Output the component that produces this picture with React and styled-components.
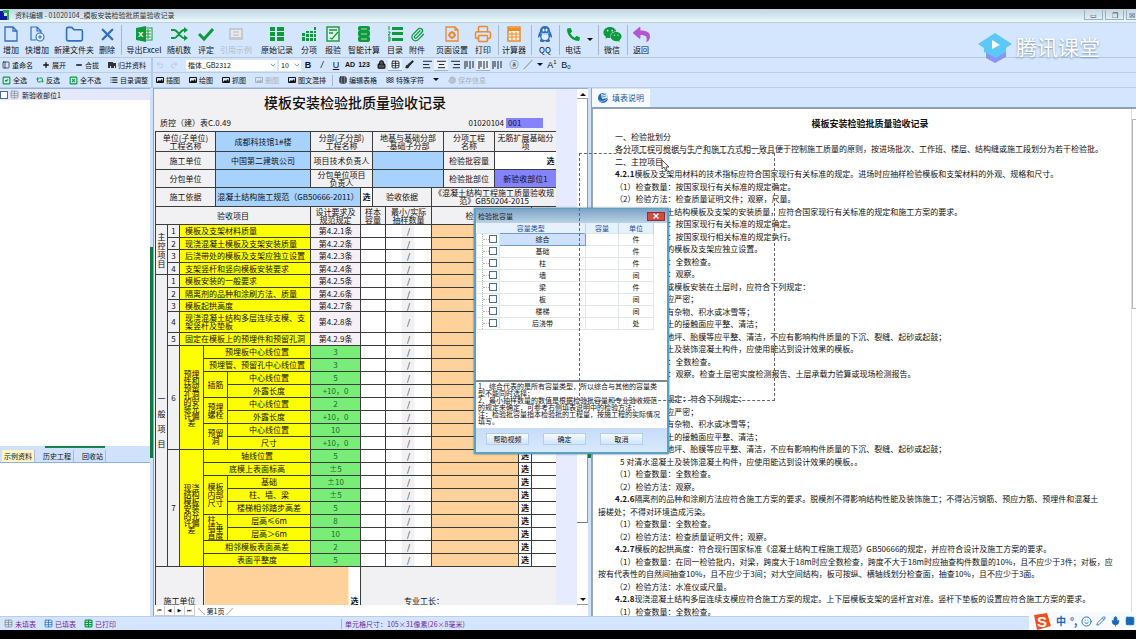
import React, { useState } from 'react'
import styled, { createGlobalStyle } from 'styled-components'
import {
  Folder, X, Printer, Paperclip, Lock, Undo2, Redo2,
  AlignLeft, AlignCenter, AlignRight, Table, List, Plus, Minus, PanelLeft, ChevronDown,
  Brush, Pencil, Mic, Smile, Hand, Waves, Grid2x2, SquareX, SquareCheck, Repeat2,
} from 'lucide-react'
import { FaPhoneAlt, FaReply, FaWeixin } from 'react-icons/fa'

const green = '#0d9a3c'
const blue = '#2f6fc4'
const orange = '#ee8a2a'

const SVG16 = ({ children }) => <svg width="16" height="16" viewBox="0 0 16 16" fill="none">{children}</svg>

const FileIcon = () => (
  <SVG16>
    <path d="M2 1h8l4 4v10H2zM10 1v4h4" stroke={blue} strokeWidth="1.3" />
  </SVG16>
)
const FileAddIcon = () => (
  <SVG16>
    <path d="M12 7V5L8 1H2v13h5M8 1v4h4" stroke={blue} strokeWidth="1.2" />
    <circle cx="11" cy="11" r="4" fill="#e6f1ff" stroke={blue} strokeWidth="1.1" />
    <path d="M11 9v4M9 11h4" stroke={blue} />
  </SVG16>
)
const ExcelIcon = () => (
  <svg width="18" height="16" viewBox="0 0 18 16">
    <rect x="9" y="2" width="8" height="12" fill="#fff" stroke={green} />
    <path d="M10 5h6M10 8h6M10 11h6M13 3v10" stroke={green} />
    <path d="M1 2l10-2v16L1 14z" fill={green} />
    <text x="3" y="11" fontSize="8" fontWeight="700" fill="#fff" fontFamily="Liberation Sans, sans-serif">X</text>
  </svg>
)
const RandomIcon = () => (
  <svg width="17" height="14" viewBox="0 0 17 14" fill="none">
    <path d="M0 3h3c4 0 6 8 10 8h1M0 11h3c4 0 6-8 10-8h1" stroke={green} strokeWidth="2" />
    <path d="M13 0l4 3-4 3zM13 8l4 3-4 3z" fill={green} />
  </svg>
)
const TickIcon = () => (
  <SVG16>
    <path d="M1 8l5 5L15 3" stroke={green} strokeWidth="3" />
  </SVG16>
)
const QuoteIcon = () => (
  <SVG16>
    <rect x="1" y="2" width="14" height="12" fill="#c5c9cf" />
    <rect x="3" y="4" width="10" height="7" fill="#e9ebee" />
    <path d="M5 6h6M5 9h6" stroke="#b5babf" />
  </SVG16>
)
const RecordIcon = () => (
  <SVG16>
    <path d="M1 1h5v4H1zM1 6h5v4H1zM1 11h5v4H1zM8 1h7v4H8zM8 6h7v4H8zM8 11h7v4H8z" fill={green} />
  </SVG16>
)
const BarsIcon = () => (
  <SVG16>
    <path d="M1 7h3v3H1zM1 11h3v4H1zM5 5h3v2H5zM5 8h3v3H5zM5 12h3v3H5zM9 5h3v2H9zM9 8h3v3H9zM9 12h3v3H9zM13 1h2v3h-2zM13 5h2v2h-2zM13 8h2v3h-2zM13 12h2v3h-2z" fill={green} />
  </SVG16>
)
const InspectIcon = () => (
  <SVG16>
    <rect x="2" y="1" width="12" height="14" fill="#e8f7ee" stroke={green} strokeWidth="1.4" />
    <path d="M4 4h8M4 7h4M5 12l2 1 6-7" stroke={green} strokeWidth="1.3" />
  </SVG16>
)
const ServerIcon = () => (
  <SVG16>
    <rect x="2" y="0" width="12" height="5" rx="2" fill={green} />
    <rect x="2" y="5" width="12" height="5" rx="1" fill={green} />
    <rect x="2" y="10" width="12" height="6" rx="2" fill={green} />
    <path d="M5 3h6M5 8h6M5 13h6" stroke="#a9dcbb" />
  </SVG16>
)
const IndexIcon = () => (
  <SVG16>
    <path d="M5 1h11v3H5zM5 6h11v3H5zM5 12h11v3H5z" fill={green} />
    <path d="M2 0v4M1 6h2v1.500L1 9h2M1 11h2v4H1M1 13h2" stroke={green} />
  </SVG16>
)
const PageSetupIcon = () => (
  <SVG16>
    <path d="M2 1h9l3 3v11H2zM11 1v3h3" stroke={orange} strokeWidth="1.3" />
    <circle cx="8" cy="9" r="2.500" stroke={orange} strokeWidth="1.800" />
    <path d="M8 5v1.500M8 11.500V13M4 9h1.500M10.500 9H12" stroke={orange} strokeWidth="1.400" />
  </SVG16>
)
const CalcIcon = () => (
  <SVG16>
    <rect x="2" y="1" width="12" height="14" fill="#fff3e4" stroke={orange} strokeWidth="1.500" />
    <path d="M2 2h12v3H2z" fill={orange} />
    <path d="M3 8h10M3 11h10M6 6v8M10 6v8" stroke={orange} />
  </SVG16>
)
const PenguinIcon = () => (
  <SVG16>
    <path d="M8 0c-3 0-5 2-5 5-1 2-2 4-2 6 0 1 1 1 2-1 0 2 1 3 1 3-2 1-1 3 1 3 1 0 2 0 3-1 1 1 2 1 3 1 2 0 3-2 1-3 0 0 1-1 1-3 1 2 2 2 2 1 0-2-1-4-2-6 0-3-2-5-5-5z" fill={blue} />
    <ellipse cx="8" cy="10.500" rx="3.500" ry="3.500" fill="#e4efff" />
    <ellipse cx="6.500" cy="4" rx="1" ry="1.500" fill="#fff" />
    <ellipse cx="9.500" cy="4" rx="1" ry="1.500" fill="#fff" />
    <path d="M4 7c3 1.500 5 1.500 8 0" stroke="#9ec6f7" strokeWidth="1.300" />
  </SVG16>
)
const VLines = () => (
  <svg width="10" height="10" viewBox="0 0 10 10"><path d="M1 1v8M3 1v6M6 1v8M9 1v7" stroke="#222" /></svg>
)
const PictureIcon = () => (
  <svg width="8" height="8" viewBox="0 0 8 8" fill="none">
    <path d="M0.500 1.500h7v5h-7z" stroke="currentColor" />
    <path d="M1 6l2-2 1 1 2-2 1 3z" fill="currentColor" />
  </svg>
)
const MergeIcon = () => (
  <svg width="8" height="8" viewBox="0 0 8 8">
    <path d="M0 1h5v1h3v5H7V5H6v2H3V5H2v2H0z" fill="#333" />
  </svg>
)
const AppLogo = () => (
  <svg width="10" height="12" viewBox="0 0 10 12">
    <path d="M0 2h4v5h3v4H0z" fill="#0b1c9a" />
    <path d="M3 1h6v10H7V4H3z" fill="#1eb14b" />
  </svg>
)
const HatLogo = () => (
  <svg width="36" height="32" viewBox="0 0 36 32">
    <path d="M9 20l9 5 11-6v6l-11 6-9-5z" fill="#8c93f5" />
    <path d="M18 1l17 11-6 4v4l-10 6-12-6v-4l-6-4z" fill="#5cc8f8" />
    <path d="M15 8l8 5-8 4z" fill="#fff" />
  </svg>
)
const TabLogo = () => (
  <svg width="12" height="12" viewBox="0 0 12 12">
    <circle cx="6" cy="6" r="5" fill="#2468b4" />
    <path d="M4 2l6-1 1 5-6 1z" fill="#dcebfb" />
    <path d="M5 3l4-1M5 5l4-1" stroke="#5b95d0" />
    <path d="M1 8c3 2 6 2 10-2" stroke="#8fc2f0" fill="none" />
  </svg>
)
const SogouLogo = () => (
  <svg width="20" height="19" viewBox="0 0 20 19">
    <path d="M2 3l13-2 4 13-14 4z" fill="#f0501e" />
    <text x="5" y="15" fontSize="15" fontWeight="700" fill="#fff" fontFamily="Liberation Sans, sans-serif">S</text>
  </svg>
)
const Pointer = () => (
  <svg width="9" height="13" viewBox="0 0 9 13"><path d="M1 1v9l2-2 2 4 1-1-1-3h3z" fill="#fff" stroke="#555" /></svg>
)

const mainTools = [
  { label: '增加', icon: <FileIcon />, w: 22 },
  { label: '快增加', icon: <FileAddIcon />, w: 30 },
  { label: '新建文件夹', icon: <Folder size={19} color={blue} strokeWidth={2} />, w: 44 },
  { label: '删除', icon: <X size={19} color={blue} strokeWidth={3} />, w: 22 },
  { sep: true, w: 6 },
  { label: '导出Excel', icon: <ExcelIcon />, w: 40 },
  { label: '随机数', icon: <RandomIcon />, w: 30 },
  { label: '评定', icon: <TickIcon />, w: 24 },
  { label: '引用示例', icon: <QuoteIcon />, w: 36, off: true },
  { gap: true, w: 4 },
  { label: '原始记录', icon: <RecordIcon />, w: 38 },
  { label: '分项', icon: <BarsIcon />, w: 26 },
  { label: '报验', icon: <InspectIcon />, w: 22 },
  { label: '智能计算', icon: <ServerIcon />, w: 40 },
  { label: '目录', icon: <IndexIcon />, w: 22 },
  { label: '附件', icon: <Paperclip size={15} color={green} strokeWidth={2} />, w: 22 },
  { gap: true, w: 6 },
  { label: '页面设置', icon: <PageSetupIcon />, w: 36 },
  { label: '打印', icon: <Printer size={18} color={orange} strokeWidth={2} />, w: 26 },
  { sep: true, w: 4 },
  { label: '计算器', icon: <CalcIcon />, w: 28 },
  { sep: true, w: 6 },
  { label: 'QQ', icon: <PenguinIcon />, w: 22 },
  { sep: true, w: 6 },
  { label: '电话', icon: <FaPhoneAlt size={13} color={green} />, w: 22 },
  { label: '', arrow: true, w: 12 },
  { sep: true, w: 4 },
  { label: '微信', icon: <FaWeixin size={19} color={green} />, w: 24 },
  { sep: true, w: 6 },
  { label: '返回', icon: <FaReply size={17} color="#b455d6" />, w: 22 },
]

const ruleRows = [
  { n: 1, text: '模板及支架材料质量', rule: '第4.2.1条', h: 13 },
  { n: 2, text: '现浇混凝土模板及支架安装质量', rule: '第4.2.2条', h: 12 },
  { n: 3, text: '后浇带处的模板及支架应独立设置', rule: '第4.2.3条', h: 13 },
  { n: 4, text: '支架竖杆和竖向模板安装要求', rule: '第4.2.4条', h: 12 },
  { n: 1, text: '模板安装的一般要求', rule: '第4.2.5条', h: 13 },
  { n: 2, text: '隔离剂的品种和涂刷方法、质量', rule: '第4.2.6条', h: 12 },
  { n: 3, text: '模板起拱高度', rule: '第4.2.7条', h: 12 },
  { n: 4, text: '现浇混凝土结构多层连续支模、支架竖杆及垫板', rule: '第4.2.8条', h: 21 },
  { n: 5, text: '固定在模板上的预埋件和预留孔洞', rule: '第4.2.9条', h: 13 },
]

const sizeRows = [
  { no: 6, noSpan: 8, title: '预埋件和预留孔洞的安装允许偏差', name: '预埋板中心线位置', v: '3' },
  { name: '预埋管、预留孔中心线位置', v: '3' },
  { group: '插筋', span: 2, name: '中心线位置', v: '5' },
  { inGroup: true, name: '外露长度', v: '+10，0' },
  { group: '预埋螺栓', span: 2, name: '中心线位置', v: '2' },
  { inGroup: true, name: '外露长度', v: '+10，0' },
  { group: '预留洞', span: 2, name: '中心线位置', v: '10' },
  { inGroup: true, name: '尺寸', v: '+10，0' },
  { no: 7, noSpan: 9, title: '现浇结构模板安装的允许偏差', name: '轴线位置', v: '5' },
  { name: '底模上表面标高', v: '±5' },
  { group: '模板内部尺寸', span: 3, name: '基础', v: '±10' },
  { inGroup: true, name: '柱、墙、梁', v: '±5' },
  { inGroup: true, name: '楼梯相邻踏步高差', v: '5' },
  { group: '柱、墙垂直度', span: 2, name: '层高≤6m', v: '8' },
  { inGroup: true, name: '层高＞6m', v: '10' },
  { name: '相邻模板表面高差', v: '2' },
  { name: '表面平整度', v: '5' },
]

const capacity = [
  ['综合', '件'], ['基础', '件'], ['柱', '件'], ['墙', '间'],
  ['梁', '件'], ['板', '间'], ['楼梯', '间'], ['后浇带', '处'],
]

const columns = [12, 12, 24, 12, 12, 83, 50, 12, 13, 46, 12, 51, 24, 13, 25]

const docLines = [
  { t: '一、检验批划分' },
  { t: '各分项工程可根据与生产和施工方式相一致且便于控制施工质量的原则，按进场批次、工作班、楼层、结构缝或施工段划分为若干检验批。' },
  { t: '二、主控项目' },
  { b: '4.2.1', t: '模板及支架用材料的技术指标应符合国家现行有关标准的规定。进场时应抽样检验模板和支架材料的外观、规格和尺寸。' },
  { t: '（1）检查数量：按国家现行有关标准的规定确定。' },
  { t: '（2）检验方法：检查质量证明文件；观察，尺量。' },
  { b: '4.2.2', t: '现浇混凝土结构模板及支架的安装质量，应符合国家现行有关标准的规定和施工方案的要求。' },
  { t: '（1）检查数量：按国家现行有关标准的规定确定。' },
  { t: '（2）检验方法：按国家现行相关标准的规定执行。' },
  { b: '4.2.3', t: '后浇带处的模板及支架应独立设置。' },
  { t: '（1）检查数量：全数检查。' },
  { t: '（2）检验方法：观察。' },
  { b: '4.2.4', t: '支架竖杆或模板安装在土层时，应符合下列规定：' },
  { t: '1 模板的接缝应严密；', sub: true },
  { t: '2 模板内不应有杂物、积水或冰雪等；', sub: true },
  { t: '3 模板与混凝土的接触面应平整、清洁；', sub: true },
  { t: '4 用作模板的地坪、胎膜等应平整、清洁，不应有影响构件质量的下沉、裂缝、起砂或起鼓；', sub: true },
  { t: '5 对清水混凝土及装饰混凝土构件，应使用能达到设计效果的模板。', sub: true },
  { t: '（1）检查数量：全数检查。' },
  { t: '（2）检验方法：观察。检查土层密实度检测报告、土层承载力验算或现场检测报告。' },
  { t: '三、一般项目' },
  { b: '4.2.5', t: '模板安装规定：符合下列规定：' },
  { t: '1 模板的接缝应严密；', sub: true },
  { t: '2 模板内不应有杂物、积水或冰雪等；', sub: true },
  { t: '3 模板与混凝土的接触面应平整、清洁；', sub: true },
  { t: '4 用作模板的地坪、胎膜等应平整、清洁，不应有影响构件质量的下沉、裂缝、起砂或起鼓；', sub: true },
  { t: '5 对清水混凝土及装饰混凝土构件，应使用能达到设计效果的模板。。', sub: true },
  { t: '（1）检查数量：全数检查。' },
  { t: '（2）检验方法：观察。' },
  { b: '4.2.6', t: '隔离剂的品种和涂刷方法应符合施工方案的要求。脱模剂不得影响结构性能及装饰施工；不得沾污钢筋、预应力筋、预埋件和混凝土' },
  { t: '接槎处；不得对环境造成污染。', flush: true },
  { t: '（1）检查数量：全数检查。' },
  { t: '（2）检验方法：检查质量证明文件；观察。' },
  { b: '4.2.7', t: '模板的起拱高度：符合现行国家标准《混凝土结构工程施工规范》GB50666的规定，并应符合设计及施工方案的要求。' },
  { t: '（1）检查数量：在同一检验批内，对梁，跨度大于18m时应全数检查，跨度不大于18m时应抽查构件数量的10%，且不应少于3件；对板，应' },
  { t: '按有代表性的自然间抽查10%，且不应少于3间；对大空间结构，板可按纵、横轴线划分检查面，抽查10%，且不应少于3面。', flush: true },
  { t: '（2）检验方法：水准仪或尺量。' },
  { b: '4.2.8', t: '现浇混凝土结构多层连续支模应符合施工方案的规定。上下层模板支架的竖杆宜对准。竖杆下垫板的设置应符合施工方案的要求。' },
  { t: '（1）检查数量：全数检查。' },
]

function MainToolbar() {
  return (
    <Ribbon>
      {mainTools.map((tool, i) => {
        if (tool.sep) return <RibbonSep key={i} $w={tool.w} />
        if (tool.gap) return <RibbonGap key={i} $w={tool.w} />
        return (
          <RibbonButton key={i} $w={tool.w} $off={tool.off} aria-label={tool.label || '更多'}>
            <RibbonIcon>{tool.arrow ? <Caret /> : tool.icon}</RibbonIcon>
            {tool.label}
          </RibbonButton>
        )
      })}
    </Ribbon>
  )
}

function FormatRow() {
  return (
    <Strip>
      <StripLeft>
        <Tool><PanelLeft size={8} />重命名</Tool>
        <Tool><Plus size={8} strokeWidth={4} />展开</Tool>
        <Tool><Minus size={8} strokeWidth={4} />合拢</Tool>
        <Tool><MergeIcon />归并资料</Tool>
      </StripLeft>
      <FormatTools>
        <FormatButton $off aria-label="撤销"><Undo2 size={8} /></FormatButton>
        <FormatButton $off aria-label="恢复"><Redo2 size={8} /></FormatButton>
        <SelectBox $w={91} $gap={5}>
          <select aria-label="字体"><option>楷体_GB2312</option></select>
          <ChevronDown size={8} color={blue} />
        </SelectBox>
        <SelectBox $w={22} $gap={2}>
          <select aria-label="字号"><option>10</option></select>
          <ChevronDown size={8} color={blue} />
        </SelectBox>
        <FormatButton><b>B</b></FormatButton>
        <FormatButton><i>/</i></FormatButton>
        <FormatButton><u>U</u></FormatButton>
        <FormatButton $small>AD</FormatButton>
        <FormatButton $small>123</FormatButton>
        <RibbonGap $w={3} />
        <FormatButton aria-label="锁定"><Lock size={9} strokeWidth={3} fill="#555" /></FormatButton>
        <FormatButton $on aria-label="批注"><Table size={9} /></FormatButton>
        <FormatButton aria-label="格式刷"><Brush size={9} strokeWidth={2} fill="#333" /></FormatButton>
        <RibbonGap $w={4} />
        <FormatButton aria-label="左对齐"><AlignLeft size={11} /></FormatButton>
        <FormatButton $on aria-label="居中"><AlignCenter size={11} /></FormatButton>
        <FormatButton aria-label="右对齐"><AlignRight size={11} /></FormatButton>
        <FormatButton aria-label="顶端对齐"><VLines /></FormatButton>
        <FormatButton $on aria-label="垂直居中"><VLines /></FormatButton>
        <FormatButton aria-label="底端对齐"><VLines /></FormatButton>
        <RibbonGap $w={3} />
        <FormatButton>ⓐ</FormatButton>
        <FormatButton>╱</FormatButton>
        <FormatButton $narrow aria-label="线型"><Caret /></FormatButton>
        <FormatButton>A<sup>1</sup></FormatButton>
        <FormatButton>B<sub>0</sub></FormatButton>
      </FormatTools>
    </Strip>
  )
}

function InsertRow() {
  return (
    <Strip>
      <StripLeft>
        <Tool><SquareCheck size={9} color={green} strokeWidth={3} />全选</Tool>
        <Tool><Repeat2 size={8} color={green} strokeWidth={3} />反选</Tool>
        <Tool><SquareX size={9} color={green} strokeWidth={3} />全不选</Tool>
        <Tool><List size={8} strokeWidth={3} />目录调整</Tool>
      </StripLeft>
      <InsertTools>
        <Tool><PictureIcon />插图</Tool>
        <Tool><PictureIcon />绘图</Tool>
        <Tool><PictureIcon />抓图</Tool>
        <Tool $off><PictureIcon />删图</Tool>
        <Tool><PictureIcon />图文混排</Tool>
        <StripSep />
        <Tool><Table size={8} strokeWidth={3} />编辑表格</Tool>
        <Tool><Waves size={8} strokeWidth={3} />特殊字符</Tool>
        <Caret />
        <Tool $off><Hand size={8} fill="#b9c3d2" />保存信息</Tool>
      </InsertTools>
    </Strip>
  )
}

function Sidebar() {
  const [tab, setTab] = useState('示例资料')
  return (
    <Side>
      <Tree>
        <TreeItem>
          <TickBox type="checkbox" />
          <Table size={9} color="#8a8f98" />
          <span>新验收部位1</span>
        </TreeItem>
      </Tree>
      <SideSplit><i /></SideSplit>
      <SideTabs>
        {['示例资料', '历史工程', '回收站'].map(name => (
          <SideTab key={name} $active={name === tab} onClick={() => setTab(name)}>{name}</SideTab>
        ))}
      </SideTabs>
      <SideBody />
    </Side>
  )
}

const TailCells = () => (
  <>
    <Td $bg="#fff" colSpan={2} />
    <SlashTd>/</SlashTd>
    <Td $bg="#fed29a" colSpan={3} />
    <Td $bg="#fff"><PickButton>选</PickButton></Td>
    <Td $bg="#fff" />
  </>
)

function Sheet() {
  return (
    <SheetPane>
      <SheetScroll>
        <Paper>
          <SheetTitle>模板安装检验批质量验收记录</SheetTitle>
          <SheetMeta>
            <span>质控（建）表C.0.49</span>
            <span>01020104<Serial>001</Serial></span>
          </SheetMeta>
          <SheetTable>
            <colgroup>
              {columns.map((w, i) => <Col key={i} $w={w} />)}
            </colgroup>
            <tbody>
              <Row $h={20}>
                <Td colSpan={4}>单位(子单位)<br />工程名称</Td>
                <Td colSpan={2} $bg="#a6d2fd">成都科技馆1#楼</Td>
                <Td colSpan={2}>分部(子分部)<br />工程名称</Td>
                <Td colSpan={3}>地基与基础分部<br />-基础子分部</Td>
                <Td>分项工程<br />名称</Td>
                <Td colSpan={3}>无筋扩展基础分<br />项</Td>
              </Row>
              <Row $h={18}>
                <Td colSpan={4}>施工单位</Td>
                <Td colSpan={2} $bg="#a6d2fd">中国第二建筑公司</Td>
                <Td colSpan={2}>项目技术负责人</Td>
                <Td colSpan={3} $bg="#a6d2fd" />
                <Td>检验批容量</Td>
                <Td colSpan={3} $bg="#fff" $align="right"><PickButton>选</PickButton></Td>
              </Row>
              <Row $h={18}>
                <Td colSpan={4}>分包单位</Td>
                <Td colSpan={2} $bg="#a6d2fd" />
                <Td colSpan={2}>分包单位项目<br />负责人</Td>
                <Td colSpan={3} $bg="#a6d2fd" />
                <Td>检验批部位</Td>
                <Td colSpan={3} $bg="#8583fb">新验收部位1</Td>
              </Row>
              <Row $h={19}>
                <Td colSpan={4}>施工依据</Td>
                <Td colSpan={3} $bg="#a6d2fd">混凝土结构施工规范（GB50666-2011）</Td>
                <Td $bg="#fff"><PickButton>选</PickButton></Td>
                <Td colSpan={2}>验收依据</Td>
                <Td colSpan={5}>《混凝土结构工程施工质量验收规<br />范》GB50204-2015</Td>
              </Row>
              <Row $h={18}>
                <Td colSpan={6}>验收项目</Td>
                <Td>设计要求及<br />规范规定</Td>
                <Td colSpan={2}>样本<br />容量</Td>
                <Td>最小/实际<br />抽样数量</Td>
                <Td colSpan={4}>检查记录</Td>
                <Td>检查<br />结果</Td>
              </Row>
              {ruleRows.map((row, i) => (
                <Row key={row.rule} $h={row.h}>
                  {i === 0 && <Td rowSpan={4}><Upright $lh={9}>主控项目</Upright></Td>}
                  {i === 4 && <Td rowSpan={22}><Upright $lh={15}>一般项目</Upright></Td>}
                  <Td>{row.n}</Td>
                  <Td colSpan={4} $bg="#fefe02" $align="left">{row.text}</Td>
                  <Td $bg="#f6eff5">{row.rule}</Td>
                  <TailCells />
                </Row>
              ))}
              {sizeRows.map((row, i) => (
                <Row key={i} $h={13}>
                  {row.no && <Td rowSpan={row.noSpan}>{row.no}</Td>}
                  {row.no && <Td rowSpan={row.noSpan} $bg="#fefe02"><Pair $lh={7}>{row.title}</Pair></Td>}
                  {row.group && <Td rowSpan={row.span} colSpan={2} $bg="#fefe02"><Pair $lh={8}>{row.group}</Pair></Td>}
                  <Td colSpan={row.group || row.inGroup ? 1 : 3} $bg="#fefe02">{row.name}</Td>
                  <Td $bg="#78ee78" $color="#1c6b2c">{row.v}</Td>
                  <TailCells />
                </Row>
              ))}
              <Row $h={68}>
                <Td colSpan={3}>施工单位</Td>
                <SignTd colSpan={4}><PickButton>选</PickButton></SignTd>
                <ForemanTd colSpan={8}>专业工长：</ForemanTd>
              </Row>
            </tbody>
          </SheetTable>
        </Paper>
        <PaperEdge />
        <VBar>
          <BarButton aria-label="向上"><Caret $up /></BarButton>
          <BarThumb />
          <BarButton aria-label="向下"><Caret /></BarButton>
        </VBar>
      </SheetScroll>
      <SheetTabs>
        <NavButton>⏮</NavButton>
        <NavButton>◀</NavButton>
        <NavButton>▶</NavButton>
        <NavButton>⏭</NavButton>
        <SheetTab>╲ 第1页 ╱</SheetTab>
      </SheetTabs>
    </SheetPane>
  )
}

function Guide() {
  return (
    <GuidePane>
      <GuideTabs>
        <GuideTab><TabLogo />填表说明</GuideTab>
      </GuideTabs>
      <GuideBody>
        <Doc>
          <DocTitle>模板安装检验批质量验收记录</DocTitle>
          {docLines.map((line, i) => (
            <DocLine key={i} $flush={line.flush} $sub={line.sub}>
              {line.b && <b>{line.b}</b>}{line.t}
            </DocLine>
          ))}
        </Doc>
        <GuideBar><i /></GuideBar>
      </GuideBody>
    </GuidePane>
  )
}

function CapacityDialog() {
  return (
    <Dialog role="dialog" aria-label="检验批容量">
      <DialogHead>
        检验批容量
        <CloseButton aria-label="关闭"><X size={8} strokeWidth={4} /></CloseButton>
      </DialogHead>
      <DialogList>
        <CapTable>
          <thead>
            <tr><th colSpan={2}>容量类型</th><th>容量</th><th>单位</th></tr>
          </thead>
          <tbody>
            {capacity.map(([name, unit], i) => (
              <tr key={name}>
                <CapTd $w={23}><Branch><TickBox type="checkbox" aria-label={name} /></Branch></CapTd>
                <CapTd $w={86} $active={i === 0}>{name}</CapTd>
                <CapTd $w={33} />
                <CapTd $w={35}>{unit}</CapTd>
              </tr>
            ))}
          </tbody>
        </CapTable>
      </DialogList>
      <DialogNote>
        1、综合代表的是所有容量类型，所以综合与其他的容量类<br />
        型不能同时选择；<br />
        2、最小抽样数量的数值是根据检验批容量和专业验收规范<br />
        的规定来确定，可参考右侧填表说明中的检验方法；<br />
        注：检验批容量指本检验批的工程量，按施工程的实际情况<br />
        填写。
      </DialogNote>
      <DialogFoot>
        <DialogButton>帮助视频</DialogButton>
        <DialogButton>确定</DialogButton>
        <DialogButton>取消</DialogButton>
      </DialogFoot>
    </Dialog>
  )
}

export default function App() {
  return (
    <Screen>
      <GlobalStyle />
      <TitleBar>
        <AppLogo />
        <span>资料编辑 - 01020104_模板安装检验批质量验收记录</span>
        <WindowButtons>
          <button aria-label="最小化">▭</button>
          <button aria-label="还原">❐</button>
          <button aria-label="关闭">☒</button>
        </WindowButtons>
      </TitleBar>
      <MainToolbar />
      <FormatRow />
      <InsertRow />
      <Work>
        <Sidebar />
        <Splitter><i /></Splitter>
        <Sheet />
        <Splitter><i /></Splitter>
        <Guide />
      </Work>
      <StatusBar>
        <StatusLeft>
          <StatusItem><Table size={9} color="#888" />未填表</StatusItem>
          <StatusItem><Table size={9} color={blue} />已填表</StatusItem>
          <StatusItem><Table size={9} color={green} strokeWidth={3} />已打印</StatusItem>
        </StatusLeft>
        <CellInfo>单元格尺寸：105×31像素(26×8毫米)</CellInfo>
      </StatusBar>
      <Brand><HatLogo />腾讯课堂</Brand>
      <CapacityDialog />
      <DragFrame />
      <PointerMark><Pointer /></PointerMark>
      <ImeBar>
        <SogouLogo />
        <b>中</b>
        <b>°,</b>
        <Smile size={11} />
        <Pencil size={10} />
        <Mic size={11} fill="#1767b8" />
        <Grid2x2 size={10} fill="#1767b8" />
      </ImeBar>
    </Screen>
  )
}

const GlobalStyle = createGlobalStyle`
*{
    box-sizing:border-box;
}
body{
    margin:0;
    background:#000;
    color:#111;
    font-family:"Noto Sans CJK SC","Liberation Sans",sans-serif;
    font-size:8px;
    line-height:10px;
    white-space:nowrap;
}
button,select,input{
    font:inherit;
    color:inherit;
    margin:0;
    padding:0;
    border:0;
    background:none;
}
svg{
    flex:none;
    display:block;
}
`

const Screen = styled.div`
position:relative;
height:100vh;
display:flex;
flex-direction:column;
padding:9px 0;
overflow:hidden;
background:#000;
`

const TitleBar = styled.header`
height:14px;
flex:none;
display:flex;
align-items:center;
gap:5px;
padding-bottom:1px;
font-size:7px;
color:#333;
background:linear-gradient(#c3d3e2,#e8f8fc);
border-bottom:1px solid #c3ccd6;
`

const WindowButtons = styled.div`
margin-left:auto;
display:flex;
gap:2px;
button{
    width:19px;
    height:10px;
    line-height:8px;
    color:#334;
    border:1px solid #9fb0c6;
    border-top:0;
}
button:last-child{
    width:10px;
    border-right:0;
}
`

const Ribbon = styled.div`
height:35px;
flex:none;
display:flex;
background:#d3e6fe;
border-bottom:1px solid #bcc7d8;
`

const RibbonButton = styled.button`
width:${p => p.$w}px;
display:flex;
flex-direction:column;
align-items:center;
justify-content:center;
gap:2px;
color:${p => (p.$off ? '#b3b9c2' : '#111')};
`

const RibbonIcon = styled.span`
height:17px;
display:flex;
align-items:center;
justify-content:center;
`

const RibbonGap = styled.span`
width:${p => p.$w}px;
`

const RibbonSep = styled(RibbonGap)`
margin:2px 0;
background:linear-gradient(#a8b6ca,#a8b6ca) center / 1px 100% no-repeat;
`

const Caret = styled.i`
width:0;
height:0;
border:3px solid transparent;
border-top-color:${p => (p.$up ? 'transparent' : '#111')};
border-bottom-color:${p => (p.$up ? '#111' : 'transparent')};
transform:translateY(${p => (p.$up ? '-1px' : '1px')});
`

const Strip = styled.div`
height:15px;
flex:none;
display:flex;
font-size:7px;
background:#d3e6fe;
border-bottom:1px solid #bccbe6;
`

const StripLeft = styled.div`
width:153px;
flex:none;
display:flex;
align-items:center;
gap:9px;
padding-left:2px;
border-right:2px solid #b4c8ea;
`

const Tool = styled.button`
display:flex;
align-items:center;
gap:2px;
color:${p => (p.$off ? '#a9b2bf' : '#111')};
`

const FormatTools = styled.div`
display:flex;
align-items:center;
`

const InsertTools = styled.div`
display:flex;
align-items:center;
gap:9px;
padding-left:3px;
`

const StripSep = styled.span`
width:1px;
height:11px;
margin:0 -3px;
background:#a8b6ca;
`

const FormatButton = styled.button`
width:${p => (p.$narrow ? 10 : 14)}px;
height:12px;
display:flex;
align-items:center;
justify-content:center;
font-family:"Liberation Sans","Noto Sans CJK SC",sans-serif;
font-size:${p => (p.$small ? 7 : 9)}px;
font-weight:${p => (p.$small ? 700 : 400)};
color:${p => (p.$off ? '#b3bdcb' : '#111')};
background:${p => (p.$on ? '#e9f2ff' : 'none')};
border-bottom:1px solid ${p => (p.$on ? '#9fb0cc' : 'transparent')};
sup,sub{
    font-size:6px;
    line-height:6px;
}
sup{
    align-self:flex-start;
}
sub{
    align-self:flex-end;
}
`

const SelectBox = styled.label`
width:${p => p.$w}px;
margin-left:${p => p.$gap}px;
height:11px;
display:flex;
align-items:center;
background:#fff;
select{
    flex:1;
    min-width:0;
    appearance:none;
    padding-left:2px;
}
`

const Work = styled.main`
flex:1;
min-height:0;
display:flex;
background:#cfe1fb;
`

const Side = styled.aside`
width:150px;
flex:none;
display:flex;
flex-direction:column;
font-size:7px;
`

const Tree = styled.div`
flex:358;
background:#fff;
border-top:1px solid #8fb2e6;
`

const TreeItem = styled.label`
display:flex;
align-items:center;
gap:2px;
height:11px;
background:#e4e8fb;
span{
    padding-left:1px;
}
`

const TickBox = styled.input`
appearance:none;
display:block;
width:8px;
height:8px;
background:#fff;
border:1px solid #4a6d92;
&:checked{
    background:#2d4f74;
}
`

const SideSplit = styled.div`
height:4px;
display:flex;
justify-content:center;
i{
    width:60px;
    height:2px;
    background:#17824f;
}
`

const SideTabs = styled.div`
display:flex;
gap:6px;
height:12px;
padding-left:2px;
`

const SideTab = styled.button`
padding:0 2px;
background:${p => (p.$active ? '#fdf6c8' : 'none')};
border-right:1px solid #a9bddb;
`

const SideBody = styled.div`
flex:154;
background:#fff;
border-top:1px solid #8fb2e6;
`

const Splitter = styled.div`
width:4px;
flex:none;
display:flex;
align-items:center;
background:#cfe1fb;
border-right:1px solid #7fa6e0;
i{
    width:3px;
    height:211px;
    background:#0f7a45;
}
`

const SheetPane = styled.section`
width:434px;
flex:none;
display:flex;
flex-direction:column;
background:#fff;
border-top:1px solid #8fb2e6;
`

const SheetScroll = styled.div`
flex:1;
min-height:0;
display:flex;
overflow:hidden;
`

const Paper = styled.div`
width:402px;
flex:none;
background:#f1f0f3;
`

const PaperEdge = styled.div`
flex:1;
background:#e6ebfd;
`

const SheetTitle = styled.h1`
margin:0;
padding:3px 0 4px;
font-size:14px;
line-height:20px;
font-weight:500;
text-align:center;
`

const SheetMeta = styled.div`
height:15px;
display:flex;
justify-content:space-between;
align-items:center;
padding:0 13px 2px 6px;
`

const Serial = styled.span`
display:inline-block;
width:37px;
margin-left:2px;
padding-left:2px;
background:#8583fb;
`

const SheetTable = styled.table`
width:401px;
margin-left:1px;
table-layout:fixed;
border-collapse:collapse;
`

const Col = styled.col`
width:${p => p.$w}px;
`

const Row = styled.tr`
height:${p => p.$h}px;
`

const Td = styled.td`
padding:0 0 0 ${p => (p.$align === 'left' ? 5 : 0)}px;
border:1px solid #3c3c3c;
color:${p => p.$color || '#111'};
background:${p => p.$bg || '#f1f0f3'};
text-align:${p => p.$align || 'center'};
vertical-align:middle;
line-height:8px;
white-space:${p => (p.$align === 'left' ? 'normal' : 'nowrap')};
`

const SlashTd = styled(Td)`
background:linear-gradient(90deg,#fff 15px,#f1f0f3 15px,#f1f0f3 28px,#fff 28px);
`

const SignTd = styled(Td)`
background:linear-gradient(90deg,#fed29a 144px,#fff 144px);
text-align:right;
`

const ForemanTd = styled(Td)`
padding-left:43px;
text-align:left;
`

const PickButton = styled.button`
width:11px;
font-weight:700;
line-height:8px;
`

const Upright = styled.span`
display:block;
width:8px;
margin:0 auto;
white-space:normal;
line-height:${p => p.$lh}px;
`

const Pair = styled(Upright)`
width:16px;
`

const VBar = styled.div`
width:11px;
display:flex;
flex-direction:column;
background:#fff;
`

const BarButton = styled.button`
height:10px;
display:flex;
align-items:center;
justify-content:center;
background:#fff;
border-bottom:1px solid #999;
`

const BarThumb = styled.div`
height:424px;
margin-bottom:auto;
border-right:1px solid #999;
border-bottom:1px solid #777;
`

const SheetTabs = styled.div`
height:11px;
flex:none;
display:flex;
align-items:center;
padding-left:1px;
background:#fff;
`

const NavButton = styled.button`
width:10px;
height:10px;
font-family:"DejaVu Sans",sans-serif;
font-size:5px;
line-height:8px;
border:1px solid #ccc;
border-width:0 1px 1px 0;
`

const SheetTab = styled.button`
padding-left:3px;
font-size:7px;
`

const GuidePane = styled.section`
flex:1;
min-width:0;
display:flex;
flex-direction:column;
background:#d3e6fe;
`

const GuideTabs = styled.div`
height:21px;
flex:none;
padding-top:1px;
border-bottom:2px solid #8f9fb9;
`

const GuideTab = styled.button`
height:18px;
display:flex;
align-items:center;
gap:3px;
padding:0 6px 0 5px;
color:#235a9a;
background:#f6faff;
`

const GuideBody = styled.div`
flex:1;
min-height:0;
display:flex;
background:#fff;
border-left:1px solid #9aa8c0;
`

const Doc = styled.article`
flex:1;
min-width:0;
overflow:hidden;
padding:9px 6px 0 5px;
`

const DocTitle = styled.h2`
margin:0;
padding-left:17px;
font-size:9px;
line-height:12px;
text-align:center;
`

const DocLine = styled.p`
margin:0;
padding-left:${p => (p.$flush ? 0 : p.$sub ? 22 : 17)}px;
line-height:12px;
&:nth-child(even){
    line-height:13px;
}
`

const GuideBar = styled.div`
width:5px;
flex:none;
border-left:1px solid #ddd;
i{
    display:block;
    height:190px;
    margin-top:10px;
    border:1px solid #b5b5b5;
    border-right:0;
}
`

const StatusBar = styled.footer`
height:14px;
flex:none;
display:flex;
align-items:center;
font-size:7px;
background:#d3e6fe;
border-top:1px solid #b9cdea;
`

const StatusLeft = styled.div`
width:341px;
display:flex;
gap:8px;
padding-left:4px;
color:#7a1fa0;
`

const StatusItem = styled.span`
display:flex;
align-items:center;
gap:2px;
`

const CellInfo = styled.span`
padding-left:3px;
color:#7a1fa0;
font-size:7px;
border-left:1px solid #9fb4d4;
`

const Brand = styled.div`
position:absolute;
top:32px;
right:36px;
display:flex;
align-items:flex-start;
gap:3px;
font-size:21px;
line-height:29px;
color:#fff;
text-shadow:0 1px 2px #6f8cae;
`

const Dialog = styled.div`
position:absolute;
left:474px;
top:208px;
width:195px;
font-size:7px;
background:#cfe1f8;
border:2px solid #58a3c4;
border-top-width:1px;
box-shadow:0 0 2px #3b6f8c;
`

const DialogHead = styled.div`
height:14px;
display:flex;
align-items:center;
justify-content:space-between;
padding:0 2px;
color:#123;
background:linear-gradient(#7fa3c4,#b9d2e8);
`

const CloseButton = styled.button`
width:18px;
height:9px;
display:flex;
align-items:center;
justify-content:center;
color:#fff;
background:#cf4d42;
border:1px solid #8d2f2a;
`

const DialogList = styled.div`
height:157px;
background:#fff;
`

const CapTable = styled.table`
border-collapse:collapse;
th{
    height:10px;
    padding:0;
    color:#1f4f9a;
    font-weight:400;
    line-height:8px;
    background:#e6f1fd;
    border-right:1px solid #bcd3ee;
}
`

const CapTd = styled.td`
width:${p => p.$w}px;
height:12px;
padding:0;
text-align:center;
line-height:8px;
background:${p => (p.$active ? '#cfe0fa' : '#fff')};
border:1px solid ${p => (p.$active ? '#6d9ad8' : '#e1e8e4')};
`

const Branch = styled.span`
display:flex;
align-items:center;
height:11px;
margin-left:5px;
border-left:1px dotted #b4b4b4;
&::before{
    content:"";
    width:6px;
    border-top:1px dotted #b4b4b4;
}
`

const DialogNote = styled.div`
height:48px;
padding:1px 2px;
line-height:7px;
background:#fff;
border-top:2px solid #7d8894;
overflow:hidden;
`

const DialogFoot = styled.div`
height:24px;
display:flex;
align-items:center;
gap:14px;
padding:0 0 3px 10px;
background:linear-gradient(#c6dcf8,#d9e9fc);
`

const DialogButton = styled.button`
width:43px;
height:12px;
background:linear-gradient(#f7fbff,#cfe4fb);
border:1px solid #b4cfea;
`

const DragFrame = styled.div`
position:absolute;
left:579px;
top:153px;
width:196px;
height:248px;
border:1px dashed #666;
pointer-events:none;
`

const PointerMark = styled.div`
position:absolute;
left:661px;
top:159px;
`

const ImeBar = styled.div`
position:absolute;
right:0;
bottom:9px;
width:107px;
height:18px;
display:flex;
align-items:center;
gap:4px;
padding-left:3px;
overflow:hidden;
color:#1767b8;
background:#f7fafe;
font-size:10px;
`
